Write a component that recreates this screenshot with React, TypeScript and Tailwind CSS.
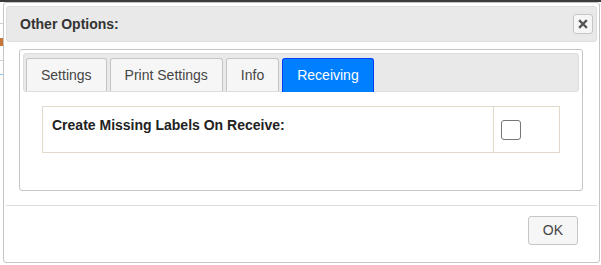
// Dialog "Other Options" — tab Receiving aktif, gaya jQuery UI base theme.
const TABS = [
  { label: 'Settings', active: false },
  { label: 'Print Settings', active: false },
  { label: 'Info', active: false },
  { label: 'Receiving', active: true },
];

function CloseIcon() {
  return (
    <svg width="10" height="10" viewBox="0 0 10 10">
      <path d="M2 2 L8 8 M8 2 L2 8" stroke="#555" strokeWidth="2.4" strokeLinecap="square" />
    </svg>
  );
}

export default function App() {
  return (
    <div
      className="flex h-[265px] w-[601px] flex-col overflow-hidden bg-white text-[14px] text-[#333]"
      style={{ fontFamily: '"Liberation Sans", Arial, sans-serif' }}
    >
      {/* strip gelap halaman di belakang dialog */}
      <div className="h-[2px] shrink-0 bg-[#3a3a3a]" />
      <div className="flex flex-1">
        {/* potongan halaman di kiri */}
        <div className="flex w-[3px] shrink-0 flex-col">
          <div className="h-[21px]" />
          <div className="h-px bg-[#cfcfcf]" />
          <div className="h-[14px]" />
          <div className="h-[8px] bg-[#c8773a]" />
          <div className="h-[14px]" />
          <div className="h-px bg-[#d4d4d4]" />
          <div className="h-[13px]" />
          <div className="h-px bg-[#8fc3ef]" />
        </div>

        {/* dialog */}
        <div className="flex h-[261px] w-[597px] shrink-0 flex-col rounded-[3px] border border-[#c5c5c5] bg-white px-[2px] pt-[3px]">
          <div className="flex h-[36px] shrink-0 items-center justify-between rounded-[3px] border border-[#dddddd] bg-[#e9e9e9] pl-[13px] pr-[3px]">
            <span className="font-bold text-[#333]">Other Options:</span>
            <button className="flex h-[20px] w-[20px] items-center justify-center rounded-[3px] border border-[#c5c5c5] bg-[#f6f6f6]">
              <CloseIcon />
            </button>
          </div>

          <div className="pb-[14px] pl-[13px] pr-[14px] pt-[7px]">
            <div className="rounded-[3px] border border-[#c5c5c5] p-[3px]">
              <div className="flex gap-[3px] rounded-[3px] border border-[#dddddd] bg-[#e9e9e9] px-[2px] pt-[4px]">
                {TABS.map((t) => (
                  <div
                    key={t.label}
                    className={`rounded-t-[3px] border border-b-0 px-[14px] pb-[7px] pt-[7px] leading-[18px] ${
                      t.active
                        ? '-mb-px border-[#003eff] bg-[#007fff] pb-[8px] text-white'
                        : 'border-[#c5c5c5] bg-[#f6f6f6] text-[#454545]'
                    }`}
                  >
                    {t.label}
                  </div>
                ))}
              </div>

              <div className="px-[19px] pb-[34px] pt-[14px]">
                <div className="flex h-[47px] border border-[#e2d9ca]">
                  <div className="flex-1 px-[9px] pt-[10px] font-bold leading-[16px] text-[#222]">
                    Create Missing Labels On Receive:
                  </div>
                  <div className="flex w-[66px] items-center border-l border-[#e2d9ca] pl-[7px]">
                    <div className="h-[20px] w-[20px] rounded-[3px] border border-[#767676] bg-white" />
                  </div>
                </div>
              </div>
            </div>
          </div>

          <div className="flex justify-end border-t border-[#dddddd] pr-[19px] pt-[10px]">
            <button className="h-[29px] rounded-[3px] border border-[#c5c5c5] bg-[#f6f6f6] px-[14px] text-[#454545]">
              OK
            </button>
          </div>
        </div>
      </div>
    </div>
  );
}
